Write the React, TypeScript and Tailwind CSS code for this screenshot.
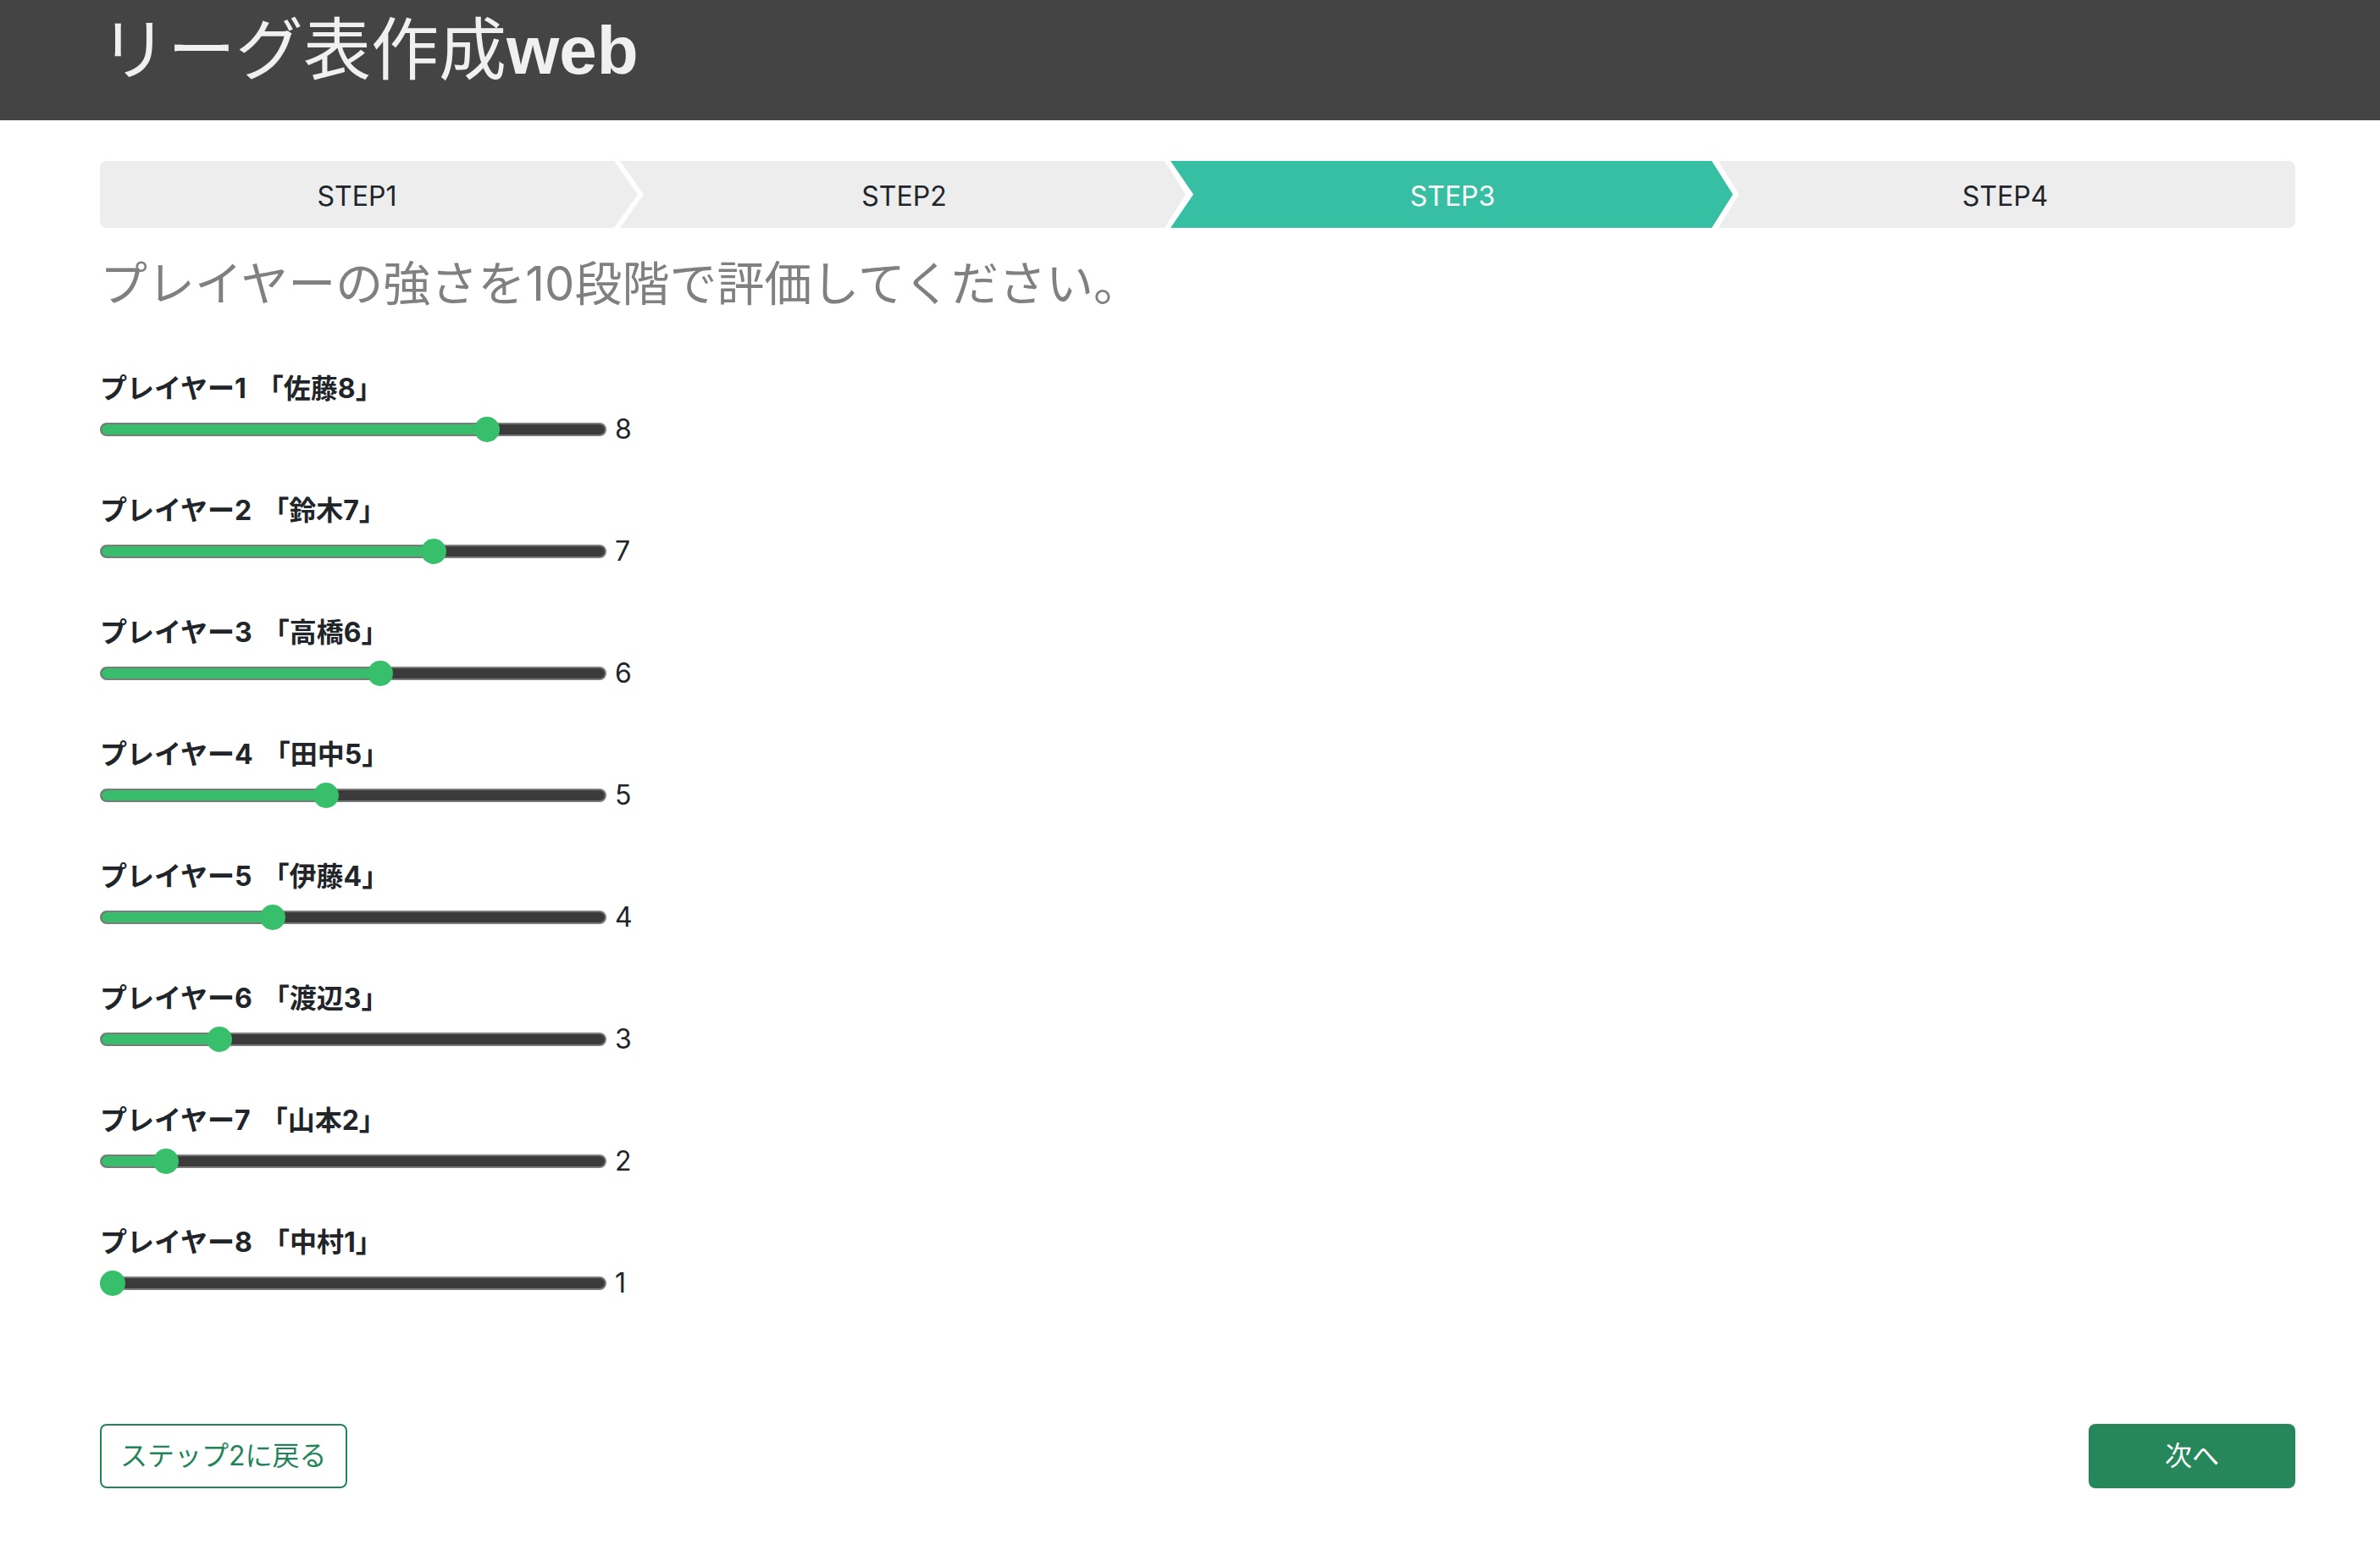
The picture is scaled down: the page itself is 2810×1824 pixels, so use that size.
import React from "react";

const players = [
  { n: 1, name: "佐藤8", v: 8 },
  { n: 2, name: "鈴木7", v: 7 },
  { n: 3, name: "高橋6", v: 6 },
  { n: 4, name: "田中5", v: 5 },
  { n: 5, name: "伊藤4", v: 4 },
  { n: 6, name: "渡辺3", v: 3 },
  { n: 7, name: "山本2", v: 2 },
  { n: 8, name: "中村1", v: 1 },
];

function Slider({ v }: { v: number }) {
  const center = 15 + ((v - 1) * 568) / 9;
  return (
    <div className="flex items-center h-[52px]">
      <div className="relative w-[598px] h-[16px]">
        <div className="absolute inset-0 rounded-full bg-[#3b3b3b] border-2 border-[#7b7b7b] overflow-hidden">
          <div className="h-full bg-[#37bd6c]" style={{ width: center }} />
        </div>
        <div
          className="absolute top-1/2 w-[30px] h-[30px] -mt-[15px] -ml-[15px] rounded-full bg-[#37bf6c]"
          style={{ left: center }}
        />
      </div>
      <span className="ml-[10px] text-[32px] leading-none text-[#212529]">{v}</span>
    </div>
  );
}

export default function App() {
  return (
    <div className="w-[2810px] min-h-[1824px] bg-white font-['Inter','Noto_Sans_CJK_JP',sans-serif] text-[#212529]">
      <header className="h-[142px] bg-[#444444]">
        <h1 className="ml-[118px] pt-[12px] text-[80px] leading-[96px] text-[#f0f0f0] font-['Liberation_Sans','Noto_Sans_CJK_JP',sans-serif]">
          <span className="font-normal">リーグ表作成</span>
          <span className="font-bold">web</span>
        </h1>
      </header>

      <main className="ml-[118px] w-[2592px]">
        <nav className="mt-[48px] flex h-[79px] text-[32px] leading-[83px]">
          <div className="w-[635px] h-full text-center pr-[28px] bg-[#ededed] rounded-l-[8px] [clip-path:polygon(0_0,607px_0,635px_50%,607px_100%,0_100%)]">
            STEP1
          </div>
          <div className="-ml-[21px] w-[668px] h-full text-center pl-[28px] pr-[25px] bg-[#ededed] [clip-path:polygon(0_0,643px_0,668px_50%,643px_100%,0_100%,28px_50%)]">
            STEP2
          </div>
          <div className="-ml-[18px] w-[664px] h-full text-center pl-[27px] pr-[25px] bg-[#37bfa3] text-white [clip-path:polygon(0_0,639px_0,664px_50%,639px_100%,0_100%,27px_50%)]">
            STEP3
          </div>
          <div className="-ml-[17px] w-[681px] h-full text-center pl-[24px] pr-[28px] bg-[#ededed] rounded-r-[8px] [clip-path:polygon(0_0,100%_0,100%_100%,0_100%,24px_50%)]">
            STEP4
          </div>
        </nav>

        <h2 className="mt-[33px] text-[56px] leading-[67px] text-[#808080] font-normal">
          プレイヤーの強さを10段階で評価してください。
        </h2>

        <div className="mt-[64px] flex flex-col">
          {players.map((p) => (
            <div key={p.n} className="h-[144px] flex flex-col">
              <div className="h-[48px] text-[32px] leading-[52px] font-bold">
                プレイヤー{p.n}
                <span className="ml-[12px]">「{p.name}」</span>
              </div>
              <Slider v={p.v} />
            </div>
          ))}
        </div>

        <div className="mt-[96px] flex justify-between">
          <button className="h-[76px] px-[22px] border-2 border-[#23845a] rounded-[8px] text-[32px] leading-[48px] text-[#23845a] bg-white">
            ステップ2に戻る
          </button>
          <button className="h-[76px] w-[244px] rounded-[8px] text-[32px] leading-[48px] text-white bg-[#25875a]">
            次へ
          </button>
        </div>
      </main>
    </div>
  );
}
